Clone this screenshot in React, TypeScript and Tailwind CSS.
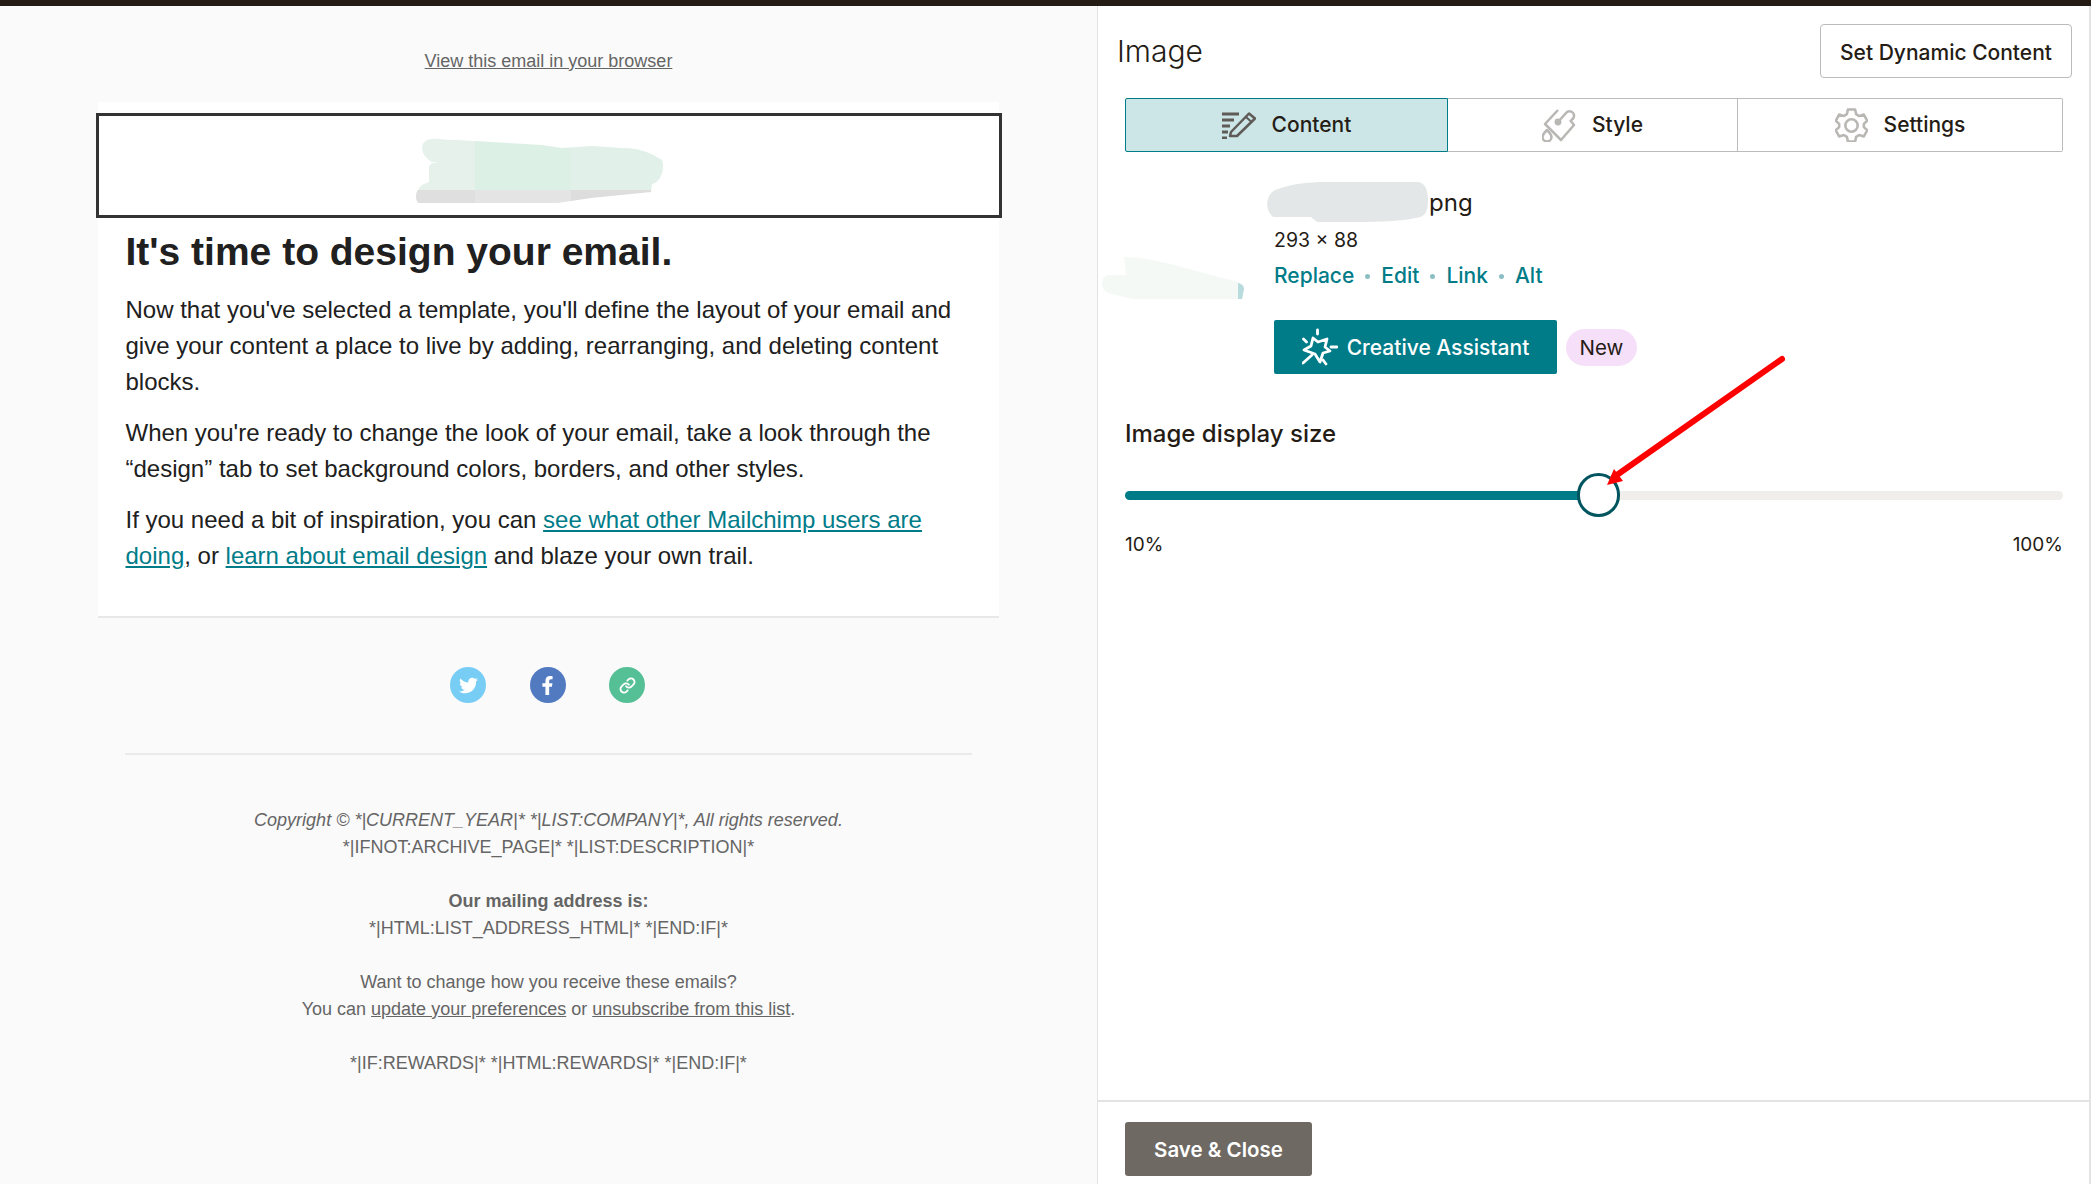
import { FaTwitter, FaFacebookF } from 'react-icons/fa';
import { Link } from 'lucide-react';

const ContentIcon = () => (
  <svg width="34" height="27" viewBox="0 0 34 27" fill="none" stroke="#5f5b57">
    <path d="M0 2h17M0 8h12M0 14h8M0 20h6M0 26h5" strokeWidth="3" />
    <path d="M8 24l1-4L27 1.500l6 5L15 24l-7 0z" strokeWidth="2.500" strokeLinejoin="round" />
    <path d="M24 5l5.500 5" strokeWidth="2" />
  </svg>
);

const StyleIcon = () => (
  <svg width="34" height="34" viewBox="9 7 34 34" fill="none" stroke="#b9b7b4" strokeWidth="2.500" strokeLinejoin="round">
    <path d="M25 9L12 23l16 16 13-15-4-5" />
    <path d="M25 21L33 12a4.500 4.500 0 1 1 5 7" />
    <circle cx="25" cy="21" r="2.200" fill="#b9b7b4" />
    <path d="M14 29c-3 3-4.500 5-4.500 7a4.500 4.500 0 0 0 9 0c0-2-1.500-4-4.500-7z" />
  </svg>
);

const GearIcon = () => (
  <svg width="33" height="34" viewBox="0 0 32 33" fill="none" stroke="#b9b7b4" strokeWidth="2.500" strokeLinejoin="round">
    <path d="M12.500 1.500h7l1 4.500 3 1.800 4.500-1.400 3.300 6-3.300 3v3.200l3.300 3-3.300 6-4.500-1.400-3 1.800-1 4.500h-7l-1-4.500-3-1.800L4 27.600l-3.300-6L4 18.600v-3.200l-3.300-3L4 6.400l4.500 1.400 3-1.800z" />
    <circle cx="16" cy="17" r="6" />
  </svg>
);

const BurstIcon = () => (
  <svg width="36" height="38" viewBox="8 5 36 38" fill="none" stroke="#ffffff" strokeWidth="2.800" strokeLinejoin="round" strokeLinecap="round">
    <path d="M19 15l5 4 9-3-2 8 5 4-7 2-3 9-5-8-11-4 7-4z" />
    <path d="M23.500 7v4M9.500 16l3 3M37 24h6M9 40l9-8M29 37l3 4" />
  </svg>
);

const Tab = ({ label, icon, active, className }: { label: string, icon: React.ReactNode, active?: boolean, className: string }) => (
  <div className={`flex items-center justify-center gap-4 h-full border text-[21px] font-medium text-[#241c15] ${active ? 'bg-[#cce5e7] border-[#007c89] rounded-l-[2px]' : 'bg-white border-[#bdbbb9]'} ${className}`}>
    {icon}
    <span>{label}</span>
  </div>
);

const SocialIcon = ({ color, children }: { color: string, children: React.ReactNode }) => (
  <div className={`w-9 h-9 rounded-full flex items-center justify-center text-white ${color}`}>
    {children}
  </div>
);

export default function App() {
  return (
    <div className="w-[2091px] h-[1184px] flex flex-col overflow-hidden bg-white relative">
      <div className="h-[6px] bg-[#241c15] shrink-0" />
      <div className="flex flex-1 min-h-0">
        {/* email preview */}
        <div className="w-[1098px] shrink-0 bg-[#fafafa] border-r border-[#e3e3e3] font-['Liberation_Sans',Arial,sans-serif]">
          <div className="h-[96px] flex justify-center pt-[40px]">
            <a className="text-[18px] leading-[30px] text-[#656565] underline h-[30px]">View this email in your browser</a>
          </div>

          <div className="w-[901px] ml-[98px] bg-white border-b-2 border-[#e8e8e8] pt-[11px] h-[516px]">
            <div className="-ml-[2px] -mr-[3px] h-[105px] border-[3px] border-[#333333] bg-white flex justify-center items-center">
              <svg className="mr-[21px] mt-[9px]" width="248" height="65" viewBox="0 0 248 65">
                <defs>
                  <clipPath id="logo-smudge">
                    <path d="M12 2c8-3 15 0 30 0l85 5 20 3 30-2 30 2c20 0 30 6 40 12 3 9-1 22-10 24l-1 8-60 6-40 6H4C-1 62-1 48 14 44V30c0-4 4-6 12-6H17C6 18 4 6 12 2z" />
                  </clipPath>
                </defs>
                <g clipPath="url(#logo-smudge)">
                  <rect x="0" y="0" width="60" height="52" fill="#e6f1ec" />
                  <rect x="60" y="0" width="96" height="52" fill="#ddf0e6" />
                  <rect x="156" y="0" width="92" height="52" fill="#e1f0e9" />
                  <rect x="0" y="52" width="60" height="13" fill="#dfdfdf" />
                  <rect x="60" y="52" width="96" height="13" fill="#e4e4e4" />
                  <rect x="156" y="52" width="92" height="13" fill="#dddddd" />
                </g>
              </svg>
            </div>
            <div className="pl-[27.5px] pr-7">
              <h1 className="text-[39px] leading-[50px] font-bold text-[#202020] mt-[9px]">It's time to design your email.</h1>
              <p className="text-[24px] leading-[36px] text-[#202020] mt-[15px]">
                Now that you've selected a template, you'll define the layout of your email and give your content a place to live by adding, rearranging, and deleting content blocks.
              </p>
              <p className="text-[24px] leading-[36px] text-[#202020] mt-[15px]">
                When you're ready to change the look of your email, take a look through the “design” tab to set background colors, borders, and other styles.
              </p>
              <p className="text-[24px] leading-[36px] text-[#202020] mt-[15px]">
                If you need a bit of inspiration, you can <a className="text-[#007c89] underline">see what other Mailchimp users are doing</a>, or <a className="text-[#007c89] underline">learn about email design</a> and blaze your own trail.
              </p>
            </div>
          </div>

          <div className="flex justify-center gap-[43.5px] mt-[49px] pr-[2px]">
            <SocialIcon color="bg-[#78cdf5]"><FaTwitter className="text-[19px]" /></SocialIcon>
            <SocialIcon color="bg-[#517ac0]"><FaFacebookF className="text-[19px]" /></SocialIcon>
            <SocialIcon color="bg-[#55bf95]"><Link size={17} strokeWidth={2.6} /></SocialIcon>
          </div>

          <div className="mx-[125px] mt-[50px] border-t-2 border-[#eaeaea]" />

          <div className="mt-[52px] text-center text-[18px] leading-[27px] text-[#656565]">
            <p className="italic">Copyright © *|CURRENT_YEAR|* *|LIST:COMPANY|*, All rights reserved.</p>
            <p>*|IFNOT:ARCHIVE_PAGE|* *|LIST:DESCRIPTION|*</p>
            <p className="mt-[27px] font-bold">Our mailing address is:</p>
            <p>*|HTML:LIST_ADDRESS_HTML|* *|END:IF|*</p>
            <p className="mt-[27px]">Want to change how you receive these emails?</p>
            <p>You can <a className="underline">update your preferences</a> or <a className="underline">unsubscribe from this list</a>.</p>
            <p className="mt-[27px]">*|IF:REWARDS|* *|HTML:REWARDS|* *|END:IF|*</p>
          </div>
        </div>

        {/* editor panel */}
        <div className="flex-1 flex flex-col min-w-0 border-r-2 border-[#e3e3e3] font-['Inter',sans-serif] text-[#241c15]">
          <div className="flex-1 min-h-0">
            <div className="flex items-center justify-between pl-[19px] pr-[17px] pt-[18px]">
              <h2 className="text-[30px] font-light">Image</h2>
              <button className="w-[252px] h-[54px] pt-[3px] border border-[#bdbbb9] rounded-[4px] text-[21px] font-medium">Set Dynamic Content</button>
            </div>

            <div className="flex h-[54px] ml-[27px] mr-[26px] mt-[20px]">
              <Tab label="Content" icon={<ContentIcon />} active className="w-[323px]" />
              <Tab label="Style" icon={<StyleIcon />} className="w-[290px] border-l-0" />
              <Tab label="Settings" icon={<GearIcon />} className="flex-1 border-l-0 rounded-r-[2px]" />
            </div>

            <div className="relative flex mt-[30px] ml-[27px]">
              <div className="absolute left-[-23px] top-[75px]">
                <svg width="142" height="42" viewBox="0 0 142 42">
                  <path d="M22 0c30 0 70 14 110 24 6 1 10 3 10 8l-2 10H30L6 36C-2 32-2 20 6 18h18z" fill="#f4f9f6" />
                  <path d="M136 26c4 1 6 3 6 6l-2 10h-4z" fill="#b8dcdd" />
                </svg>
              </div>
              <div className="ml-[149px]">
                <div className="flex items-center h-[40px] text-[24px] -ml-[7px]">
                  <svg width="162" height="40" viewBox="0 0 162 40">
                    <path d="M8 8C24 2 40 0 60 0h90c8 0 11 8 11 18s-2 17-12 18c-14 3-36 4-60 4H50l-6-5H6C-2 28-2 14 8 8z" fill="#e3e7e7" />
                  </svg>
                  <span className="mt-[2px]">png</span>
                </div>
                <div className="text-[19.5px] leading-[24px] mt-[6px]">293 × 88</div>
                <div className="flex items-center text-[21px] leading-[24px] mt-[12px] text-[#007c89] font-medium">
                  <span>Replace</span>
                  <span className="w-[5px] h-[5px] rounded-full bg-[#8bbfc4] mx-[11px]" />
                  <span>Edit</span>
                  <span className="w-[5px] h-[5px] rounded-full bg-[#8bbfc4] mx-[11px]" />
                  <span>Link</span>
                  <span className="w-[5px] h-[5px] rounded-full bg-[#8bbfc4] mx-[11px]" />
                  <span>Alt</span>
                </div>
                <div className="flex items-center mt-[32px]">
                  <button className="w-[283px] h-[54px] rounded-[2px] bg-[#007c89] text-white text-[21px] font-medium flex items-center justify-center gap-[9px]">
                    <BurstIcon />
                    <span className="pt-[2px]">Creative Assistant</span>
                  </button>
                  <span className="ml-[9px] w-[71px] h-[37px] pt-[2px] rounded-full bg-[#f6e0f9] flex items-center justify-center text-[20.5px]">New</span>
                </div>
              </div>
            </div>

            <div className="ml-[27px] mr-[26px] mt-[45px]">
              <div className="text-[24px] leading-[30px] font-medium">Image display size</div>
              <div className="relative h-[9px] mt-[42px] rounded-full bg-[#efeeea]">
                <div className="h-full w-[455px] rounded-l-full bg-[#007c89]" />
                <div className="absolute left-[452px] top-[-18px] w-[43px] h-[44px] rounded-full border-[3px] border-[#00555f] bg-white" />
              </div>
              <div className="flex justify-between text-[19px] leading-[24px] mt-[33px]">
                <span>10%</span>
                <span>100%</span>
              </div>
            </div>
          </div>

          <div className="h-[84px] shrink-0 border-t-2 border-[#e3e3e3] pl-[27px] pt-[20px]">
            <button className="w-[187px] h-[54px] pt-[2px] rounded-[3px] bg-[#6e6963] text-white text-[20.5px] font-semibold">Save & Close</button>
          </div>
        </div>
      </div>

      <svg className="absolute left-[1600px] top-[352px]" width="190" height="140" viewBox="0 0 190 140" fill="none">
        <path d="M182 7L14 125" stroke="#ff0000" strokeWidth="6" strokeLinecap="round" />
        <path d="M7 133l7-16 9 12z" fill="#ff0000" />
      </svg>
    </div>
  );
}
